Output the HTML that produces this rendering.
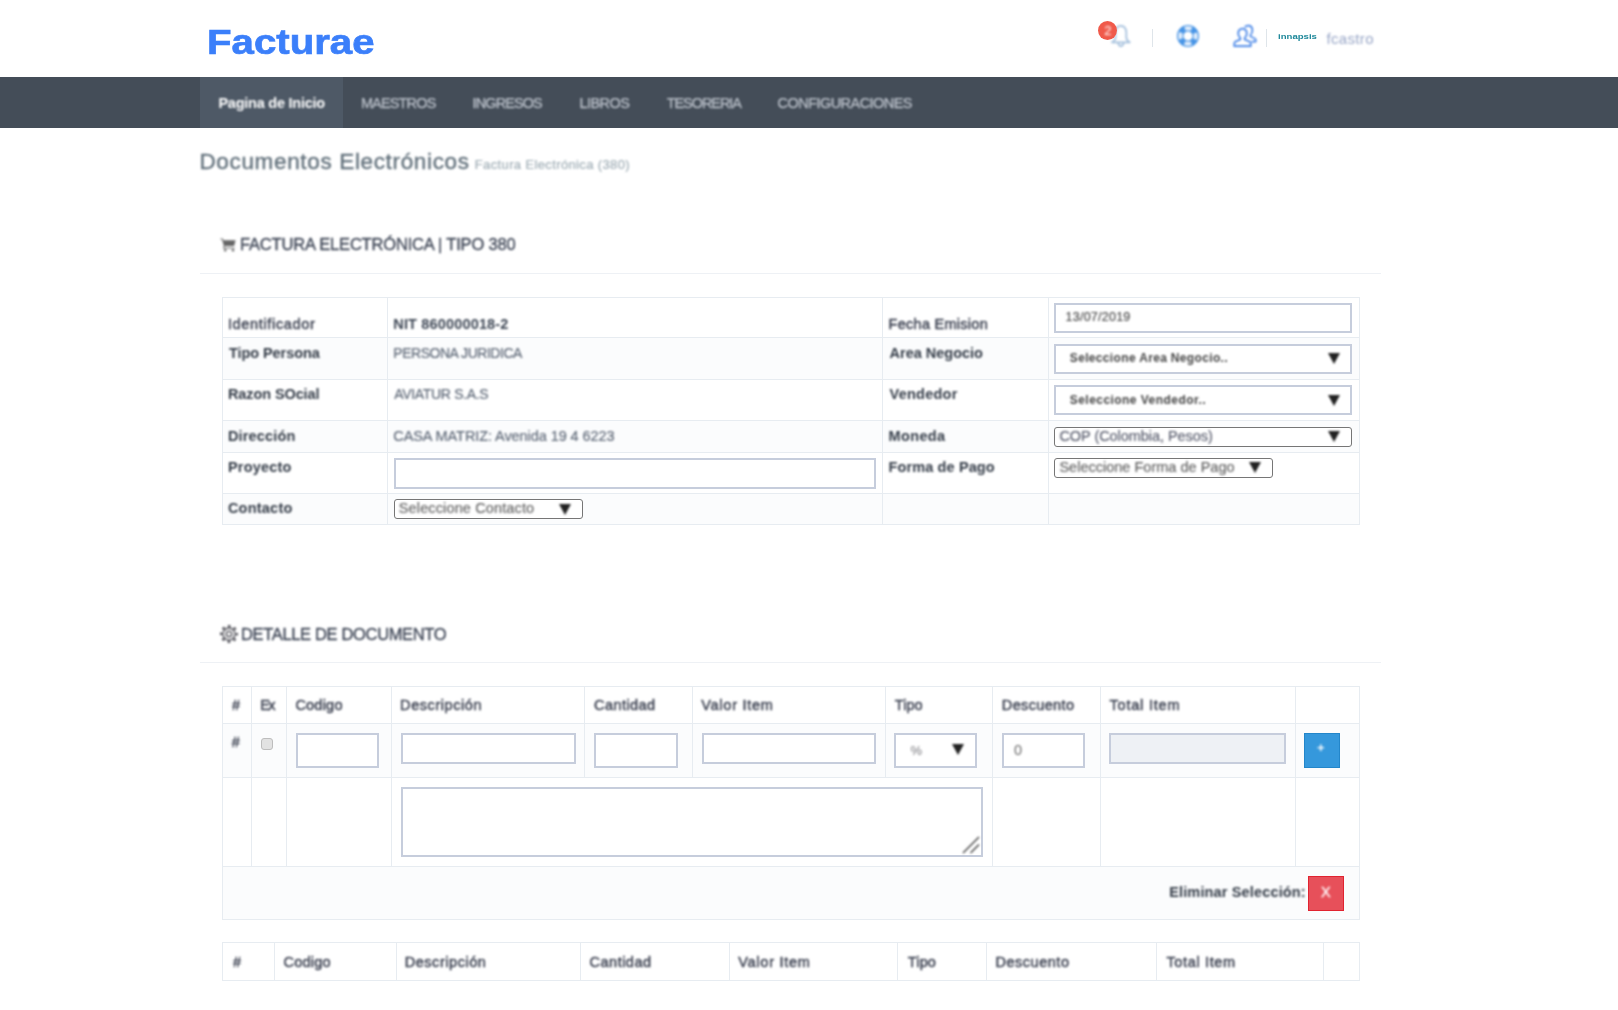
<!DOCTYPE html>
<html lang="es">
<head>
<meta charset="utf-8">
<title>Facturae</title>
<style>
*{box-sizing:border-box;margin:0;padding:0}
.t,svg,.arr{filter:blur(0.8px)}
#logo,#innapsis{filter:none}
html,body{width:1618px;height:1010px;overflow:hidden;background:#fff}
body{position:relative;font-family:"Liberation Sans","DejaVu Sans",sans-serif;color:#34495e;font-size:14px}
.a{position:absolute}
.t{position:absolute;white-space:nowrap;line-height:1}
.hl{position:absolute;height:1px;background:#e7ecf1}
.vl{position:absolute;width:1px;background:#e7ecf1}
.inp{position:absolute;border:2px solid #c6cddc;background:#fff}
.sel{position:absolute;border:1px solid #767676;border-radius:3px;background:#fff}
.arr{position:absolute;width:0;height:0;border-left:6px solid transparent;border-right:6px solid transparent;border-top:11px solid #222}
.lb{font-weight:bold;color:#333b47;font-size:14px}
.val{color:#5e6877;font-size:13px;-webkit-text-stroke:0.2px #5e6877}
.th{color:#3b4050;font-size:14px;-webkit-text-stroke:0.45px #3b4050}
.nav{color:#bcc2cb;font-size:14px;-webkit-text-stroke:0.25px #bcc2cb}
</style>
</head>
<body>

<!-- header -->
<div class="t" id="logo" style="left:206.5px;top:24.9px;font-size:35.8px;font-weight:bold;color:#3b7ffa;-webkit-text-stroke:0.7px #3b7ffa;transform-origin:0 0;transform:scaleX(1.123)">Facturae</div>

<!-- top right icons -->
<svg class="a" style="left:1109px;top:24px" width="24" height="26" viewBox="0 0 24 26">
  <path d="M11.900 1.800C8.300 1.800 6.500 4.700 6.500 8.600V13.200C6.500 15.400 5.200 17 3 18.300H20.800C18.600 17 17.300 15.400 17.300 13.200V8.600C17.300 4.700 15.500 1.800 11.900 1.800Z" fill="none" stroke="#a3bfdc" stroke-width="1.700" stroke-linejoin="round"/>
  <path d="M9.200 18.800A2.800 4.500 0 0 0 14.600 18.800" fill="none" stroke="#a3bfdc" stroke-width="1.700"/>
</svg>
<div class="a" style="left:1097.500px;top:20.500px;width:19.500px;height:19px;border-radius:10px;background:#f0594a"></div>
<div class="t" style="left:1104.200px;top:23.700px;font-size:13px;color:#fff">2</div>
<div class="vl" style="left:1151.500px;top:29px;height:18px;background:#dfe5ea"></div>
<svg class="a" style="left:1175.800px;top:23.800px" width="24" height="24" viewBox="0 0 24 24">
  <circle cx="12" cy="12" r="7.800" fill="none" stroke="#e1edfb" stroke-width="5"/>
  <circle cx="12" cy="12" r="7.800" fill="none" stroke="#4895e6" stroke-width="5" stroke-dasharray="5.600 6.652" stroke-dashoffset="-3.326"/>
  <circle cx="12" cy="12" r="10.500" fill="none" stroke="#3f8fe4" stroke-width="1.100"/>
  <circle cx="12" cy="12" r="5.100" fill="none" stroke="#3f8fe4" stroke-width="1.100"/>
</svg>
<svg class="a" style="left:1232px;top:24px" width="26" height="25" viewBox="0 0 26 25">
  <path d="M12.800 3.200C13.600 2.100 14.800 1.600 16.200 1.600c2.500 0 4.200 2 4.200 4.700 0 2-.8 3.700-2 4.700v1.400l4.200 2c.8.400 1.200 1 1.200 1.800v1.400h-4.200" fill="none" stroke="#3d7fe6" stroke-width="1.600" stroke-linejoin="round"/>
  <path d="M10.500 4.600c-2.500 0-4.300 2-4.300 4.700 0 2 .9 3.700 2.100 4.700v1.400l-4.700 2.200c-.8.400-1.300 1.100-1.300 2v2.600h16.400v-2.600c0-.9-.5-1.600-1.300-2l-4.700-2.200v-1.400c1.200-1 2.100-2.700 2.100-4.700 0-2.700-1.800-4.700-4.300-4.700z" fill="#fff" stroke="#3d7fe6" stroke-width="1.700" stroke-linejoin="round"/>
</svg>
<div class="vl" style="left:1265.500px;top:29px;height:18px;background:#dfe5ea"></div>
<div class="t" id="innapsis" style="left:1278.1px;top:33px;font-size:7.5px;font-weight:bold;color:#1c8799;transform-origin:0 0;transform:scaleX(1.279)">innapsis</div>
<div class="t" id="fcastro" style="left:1326.4px;top:30.9px;font-size:15px;color:#97a5c6;letter-spacing:0.36px">fcastro</div>

<!-- navbar -->
<div class="a" style="left:-10px;top:77px;width:1638px;height:51px;background:#444d58"></div>
<div class="a" style="left:200px;top:77px;width:143px;height:51px;background:#4e5966"></div>
<div class="t nav" id="n1" style="left:218.4px;top:96.2px;color:#fff;font-weight:bold;font-size:14.5px;letter-spacing:-0.24px;-webkit-text-stroke:0">Pagina de Inicio</div>
<div class="t nav" id="n2" style="left:360.9px;top:96.2px;font-size:14.5px;letter-spacing:-0.85px">MAESTROS</div>
<div class="t nav" id="n3" style="left:472.6px;top:96.2px;font-size:14.5px;letter-spacing:-0.91px">INGRESOS</div>
<div class="t nav" id="n4" style="left:579.6px;top:96.2px;font-size:14.5px;letter-spacing:-0.58px">LIBROS</div>
<div class="t nav" id="n5" style="left:666.7px;top:96.2px;font-size:14.5px;letter-spacing:-1.07px">TESORERIA</div>
<div class="t nav" id="n6" style="left:777.6px;top:96.2px;font-size:14.5px;letter-spacing:-0.55px">CONFIGURACIONES</div>

<!-- page title -->
<div class="t" id="h1" style="left:199.4px;top:151.0px;font-size:22.5px;color:#5f6e79;letter-spacing:0.66px;-webkit-text-stroke:0.35px #5f6e79">Documentos Electrónicos</div>
<div class="t" id="h1s" style="left:474.8px;top:158.0px;font-size:13px;color:#9eacb4;letter-spacing:0.37px;-webkit-text-stroke:0.2px #9eacb4">Factura Electrónica (380)</div>

<!-- portlet 1 title -->
<svg class="a" style="left:220px;top:237px" width="17" height="15" viewBox="0 0 17 15">
  <path d="M0.500 1.500h2.300l0.600 1.800h12.200l-1.500 5.700H4.800l-0.400 1.500h10.200v1H3l0.800-2.800L2 2.600H0.500z" fill="#666"/>
  <circle cx="5.200" cy="13.200" r="1.200" fill="#666"/><circle cx="13" cy="13.200" r="1.200" fill="#666"/>
</svg>
<div class="t" id="p1" style="left:240.0px;top:236.0px;font-size:16.5px;color:#404858;letter-spacing:-0.18px;-webkit-text-stroke:0.35px #404858">FACTURA ELECTRÓNICA | TIPO 380</div>
<div class="hl" style="left:200px;top:273px;width:1181px;background:#eef1f5"></div>

<!-- table 1 -->
<div class="a" style="left:222px;top:297px;width:1138px;height:228px;border:1px solid #e7ecf1;background:#fff"></div>
<div class="a" style="left:223px;top:338px;width:1136px;height:41px;background:#fbfcfd"></div>
<div class="a" style="left:223px;top:421px;width:1136px;height:31px;background:#fbfcfd"></div>
<div class="a" style="left:223px;top:494px;width:1136px;height:30px;background:#fbfcfd"></div>
<div class="hl" style="left:222px;top:337px;width:1138px"></div>
<div class="hl" style="left:222px;top:379px;width:1138px"></div>
<div class="hl" style="left:222px;top:420px;width:1138px"></div>
<div class="hl" style="left:222px;top:452px;width:1138px"></div>
<div class="hl" style="left:222px;top:493px;width:1138px"></div>
<div class="vl" style="left:387px;top:297px;height:228px"></div>
<div class="vl" style="left:882px;top:297px;height:228px"></div>
<div class="vl" style="left:1048px;top:297px;height:228px"></div>

<div class="t th" id="l1" style="left:227.9px;top:316.7px;font-size:14.5px;letter-spacing:0.66px">Identificador</div>
<div class="t lb" id="l2" style="left:228.9px;top:346.4px;font-size:14.5px;letter-spacing:-0.06px">Tipo Persona</div>
<div class="t lb" id="l3" style="left:227.9px;top:386.8px;font-size:14.5px;letter-spacing:-0.09px">Razon SOcial</div>
<div class="t lb" id="l4" style="left:227.9px;top:428.5px;font-size:14.5px;letter-spacing:0.18px">Dirección</div>
<div class="t lb" id="l5" style="left:227.9px;top:459.6px;font-size:14.5px;letter-spacing:0.22px">Proyecto</div>
<div class="t lb" id="l6" style="left:227.9px;top:501.0px;font-size:14.5px;letter-spacing:0.23px">Contacto</div>

<div class="t" id="v1" style="left:393.3px;top:316.7px;font-size:14.5px;color:#3d4654;font-weight:bold;letter-spacing:0.16px">NIT 860000018-2</div>
<div class="t val" id="v2" style="left:393.3px;top:345.8px;font-size:14px;letter-spacing:-0.47px">PERSONA JURIDICA</div>
<div class="t val" id="v3" style="left:394.3px;top:387.2px;font-size:14px;letter-spacing:-0.33px">AVIATUR S.A.S</div>
<div class="t val" id="v4" style="left:393.3px;top:428.5px;font-size:14.5px;letter-spacing:-0.08px">CASA MATRIZ: Avenida 19 4 6223</div>
<div class="inp" style="left:394px;top:458px;width:482px;height:31px"></div>
<div class="sel" style="left:394px;top:499px;width:189px;height:20px"></div>
<div class="t" id="s6" style="left:398.8px;top:501.0px;font-size:14.5px;color:#606060;letter-spacing:0.13px;-webkit-text-stroke:0.15px #606060">Seleccione Contacto</div>
<div class="arr" style="left:559.3px;top:503.7px"></div>

<div class="t th" id="r1" style="left:888.6px;top:316.5px;font-size:14.5px;letter-spacing:0.27px">Fecha Emision</div>
<div class="t lb" id="r2" style="left:889.6px;top:346.4px;font-size:14.5px;letter-spacing:-0.01px">Area Negocio</div>
<div class="t lb" id="r3" style="left:889.6px;top:386.9px;font-size:14.5px;letter-spacing:0.23px">Vendedor</div>
<div class="t lb" id="r4" style="left:888.6px;top:428.7px;font-size:14.5px;letter-spacing:0.34px">Moneda</div>
<div class="t lb" id="r5" style="left:888.6px;top:459.9px;font-size:14.5px;letter-spacing:0.11px">Forma de Pago</div>

<div class="inp" style="left:1054px;top:303px;width:298px;height:30px"></div>
<div class="t" id="d1" style="left:1065.5px;top:310.7px;font-size:12.5px;color:#4a4a4a;letter-spacing:0.25px;-webkit-text-stroke:0.2px #4a4a4a">13/07/2019</div>
<div class="inp" style="left:1054px;top:344px;width:298px;height:30px"></div>
<div class="t" id="d2" style="left:1069.8px;top:351.7px;font-size:12px;font-weight:bold;color:#444;letter-spacing:0.34px">Seleccione Area Negocio..</div>
<div class="arr" style="left:1328px;top:352.8px"></div>
<div class="inp" style="left:1054px;top:385px;width:298px;height:30px"></div>
<div class="t" id="d3" style="left:1069.8px;top:393.9px;font-size:12px;font-weight:bold;color:#444;letter-spacing:0.45px">Seleccione Vendedor..</div>
<div class="arr" style="left:1328px;top:394.5px"></div>
<div class="sel" style="left:1054px;top:427px;width:298px;height:20px"></div>
<div class="t" id="d4" style="left:1059.4px;top:428.7px;font-size:14.5px;color:#55596a;letter-spacing:-0.05px;-webkit-text-stroke:0.15px #55596a">COP (Colombia, Pesos)</div>
<div class="arr" style="left:1328px;top:431.2px"></div>
<div class="sel" style="left:1054px;top:458px;width:219px;height:20px"></div>
<div class="t" id="d5" style="left:1059.4px;top:459.9px;font-size:14.5px;color:#606060;letter-spacing:0.01px;-webkit-text-stroke:0.15px #606060">Seleccione Forma de Pago</div>
<div class="arr" style="left:1249px;top:462.1px"></div>

<!-- portlet 2 title -->
<svg class="a" style="left:218.600px;top:624.400px" width="20" height="20" viewBox="0 0 20 20">
  <circle cx="10" cy="10" r="6" fill="none" stroke="#4d4d55" stroke-width="1.300"/>
  <circle cx="10" cy="10" r="2.700" fill="none" stroke="#4d4d55" stroke-width="1.300"/>
  <circle cx="10" cy="10" r="7.900" fill="none" stroke="#4d4d55" stroke-width="2.200" stroke-dasharray="2.700 3.505" stroke-dashoffset="1.350"/>
</svg>
<div class="t" id="p2" style="left:241.0px;top:625.5px;font-size:16.5px;color:#404858;letter-spacing:-0.34px;-webkit-text-stroke:0.35px #404858">DETALLE DE DOCUMENTO</div>
<div class="hl" style="left:200px;top:662px;width:1181px;background:#eef1f5"></div>

<!-- table 2 -->
<div class="a" style="left:222px;top:686px;width:1138px;height:234px;border:1px solid #e7ecf1;background:#fff"></div>
<div class="a" style="left:223px;top:724px;width:1136px;height:54px;background:#fbfcfd"></div>
<div class="a" style="left:223px;top:867px;width:1136px;height:52px;background:#fbfcfd"></div>
<div class="hl" style="left:222px;top:723px;width:1138px"></div>
<div class="hl" style="left:222px;top:777px;width:1138px"></div>
<div class="hl" style="left:222px;top:866px;width:1138px"></div>
<div class="vl" style="left:251px;top:686px;height:181px"></div>
<div class="vl" style="left:286px;top:686px;height:181px"></div>
<div class="vl" style="left:391px;top:686px;height:181px"></div>
<div class="vl" style="left:584px;top:686px;height:92px"></div>
<div class="vl" style="left:692px;top:686px;height:92px"></div>
<div class="vl" style="left:885px;top:686px;height:92px"></div>
<div class="vl" style="left:992px;top:686px;height:181px"></div>
<div class="vl" style="left:1100px;top:686px;height:181px"></div>
<div class="vl" style="left:1295px;top:686px;height:181px"></div>

<div class="t th" id="a1" style="left:232.0px;top:697.8px;font-size:14.5px;letter-spacing:0.00px">#</div>
<div class="t th" id="a2" style="left:260.3px;top:697.8px;font-size:14.5px;letter-spacing:-1.60px">Ex</div>
<div class="t th" id="a3" style="left:295.4px;top:697.8px;font-size:14.5px;letter-spacing:0.22px">Codigo</div>
<div class="t th" id="a4" style="left:400.1px;top:697.8px;font-size:14.5px;letter-spacing:0.57px">Descripción</div>
<div class="t th" id="a5" style="left:594.1px;top:697.8px;font-size:14.5px;letter-spacing:0.42px">Cantidad</div>
<div class="t th" id="a6" style="left:701.2px;top:697.8px;font-size:14.5px;letter-spacing:0.75px">Valor Item</div>
<div class="t th" id="a7" style="left:894.8px;top:697.8px;font-size:14.5px;letter-spacing:0.03px">Tipo</div>
<div class="t th" id="a8" style="left:1001.8px;top:697.8px;font-size:14.5px;letter-spacing:0.36px">Descuento</div>
<div class="t th" id="a9" style="left:1109.6px;top:697.8px;font-size:14.5px;letter-spacing:0.78px">Total Item</div>

<div class="t th" id="a10" style="left:231.7px;top:734.7px;font-size:14.5px;letter-spacing:0.00px">#</div>
<div class="a" style="left:261px;top:737.5px;width:12px;height:12px;border:1px solid #bdbdbd;border-radius:3px;background:#e2e2e2"></div>
<div class="inp" style="left:296px;top:733px;width:83px;height:35px"></div>
<div class="inp" style="left:401px;top:733px;width:175px;height:31px"></div>
<div class="inp" style="left:594px;top:733px;width:84px;height:35px"></div>
<div class="inp" style="left:702px;top:733px;width:174px;height:31px"></div>
<div class="inp" style="left:894px;top:733px;width:83px;height:35px"></div>
<div class="t" id="pc" style="left:910.5px;top:744px;font-size:13px;color:#77777c">%</div>
<div class="arr" style="left:952.4px;top:743.8px"></div>
<div class="inp" style="left:1002px;top:733px;width:83px;height:35px"></div>
<div class="t" id="zero" style="left:1014px;top:743px;font-size:14.5px;color:#686868">0</div>
<div class="inp" style="left:1109px;top:733px;width:177px;height:31px;background:#eef1f5"></div>
<div class="a" style="left:1304px;top:733px;width:36px;height:35px;background:#3598dc;border:1px solid #2386ca"></div>
<div class="t" id="plus" style="left:1317px;top:741px;font-size:13px;font-weight:bold;color:#fff">+</div>

<div class="inp" style="left:401px;top:787px;width:582px;height:70px"></div>
<svg class="a" style="left:962px;top:836px" width="18" height="18" viewBox="0 0 18 18">
  <path d="M1 17L17 1M8.500 17L17 8.500" stroke="#333" stroke-width="1.200" fill="none"/>
</svg>

<div class="t lb" id="elim" style="left:1169.2px;top:884.5px;font-size:14.5px;letter-spacing:0.15px">Eliminar Selección:</div>
<div class="a" style="left:1308px;top:876px;width:36px;height:35px;background:#e7505a;border:1px solid #e12330"></div>
<div class="t" id="xx" style="left:1321px;top:885px;font-size:14.5px;color:#fff;-webkit-text-stroke:0.3px #fff">X</div>

<!-- table 3 -->
<div class="a" style="left:222px;top:942px;width:1138px;height:39px;border:1px solid #e7ecf1;background:#fff"></div>
<div class="vl" style="left:274px;top:942px;height:39px"></div>
<div class="vl" style="left:396px;top:942px;height:39px"></div>
<div class="vl" style="left:580px;top:942px;height:39px"></div>
<div class="vl" style="left:729px;top:942px;height:39px"></div>
<div class="vl" style="left:897px;top:942px;height:39px"></div>
<div class="vl" style="left:986px;top:942px;height:39px"></div>
<div class="vl" style="left:1156px;top:942px;height:39px"></div>
<div class="vl" style="left:1323px;top:942px;height:39px"></div>
<div class="t th" id="b1" style="left:232.9px;top:955.3px;font-size:14.5px;letter-spacing:0.00px">#</div>
<div class="t th" id="b2" style="left:283.6px;top:955.3px;font-size:14.5px;letter-spacing:0.22px">Codigo</div>
<div class="t th" id="b3" style="left:404.7px;top:955.3px;font-size:14.5px;letter-spacing:0.55px">Descripción</div>
<div class="t th" id="b4" style="left:589.6px;top:955.3px;font-size:14.5px;letter-spacing:0.48px">Cantidad</div>
<div class="t th" id="b5" style="left:738.2px;top:955.3px;font-size:14.5px;letter-spacing:0.75px">Valor Item</div>
<div class="t th" id="b6" style="left:907.8px;top:955.3px;font-size:14.5px;letter-spacing:0.15px">Tipo</div>
<div class="t th" id="b7" style="left:995.4px;top:955.3px;font-size:14.5px;letter-spacing:0.53px">Descuento</div>
<div class="t th" id="b8" style="left:1166.4px;top:955.3px;font-size:14.5px;letter-spacing:0.65px">Total Item</div>

</body>
</html>
